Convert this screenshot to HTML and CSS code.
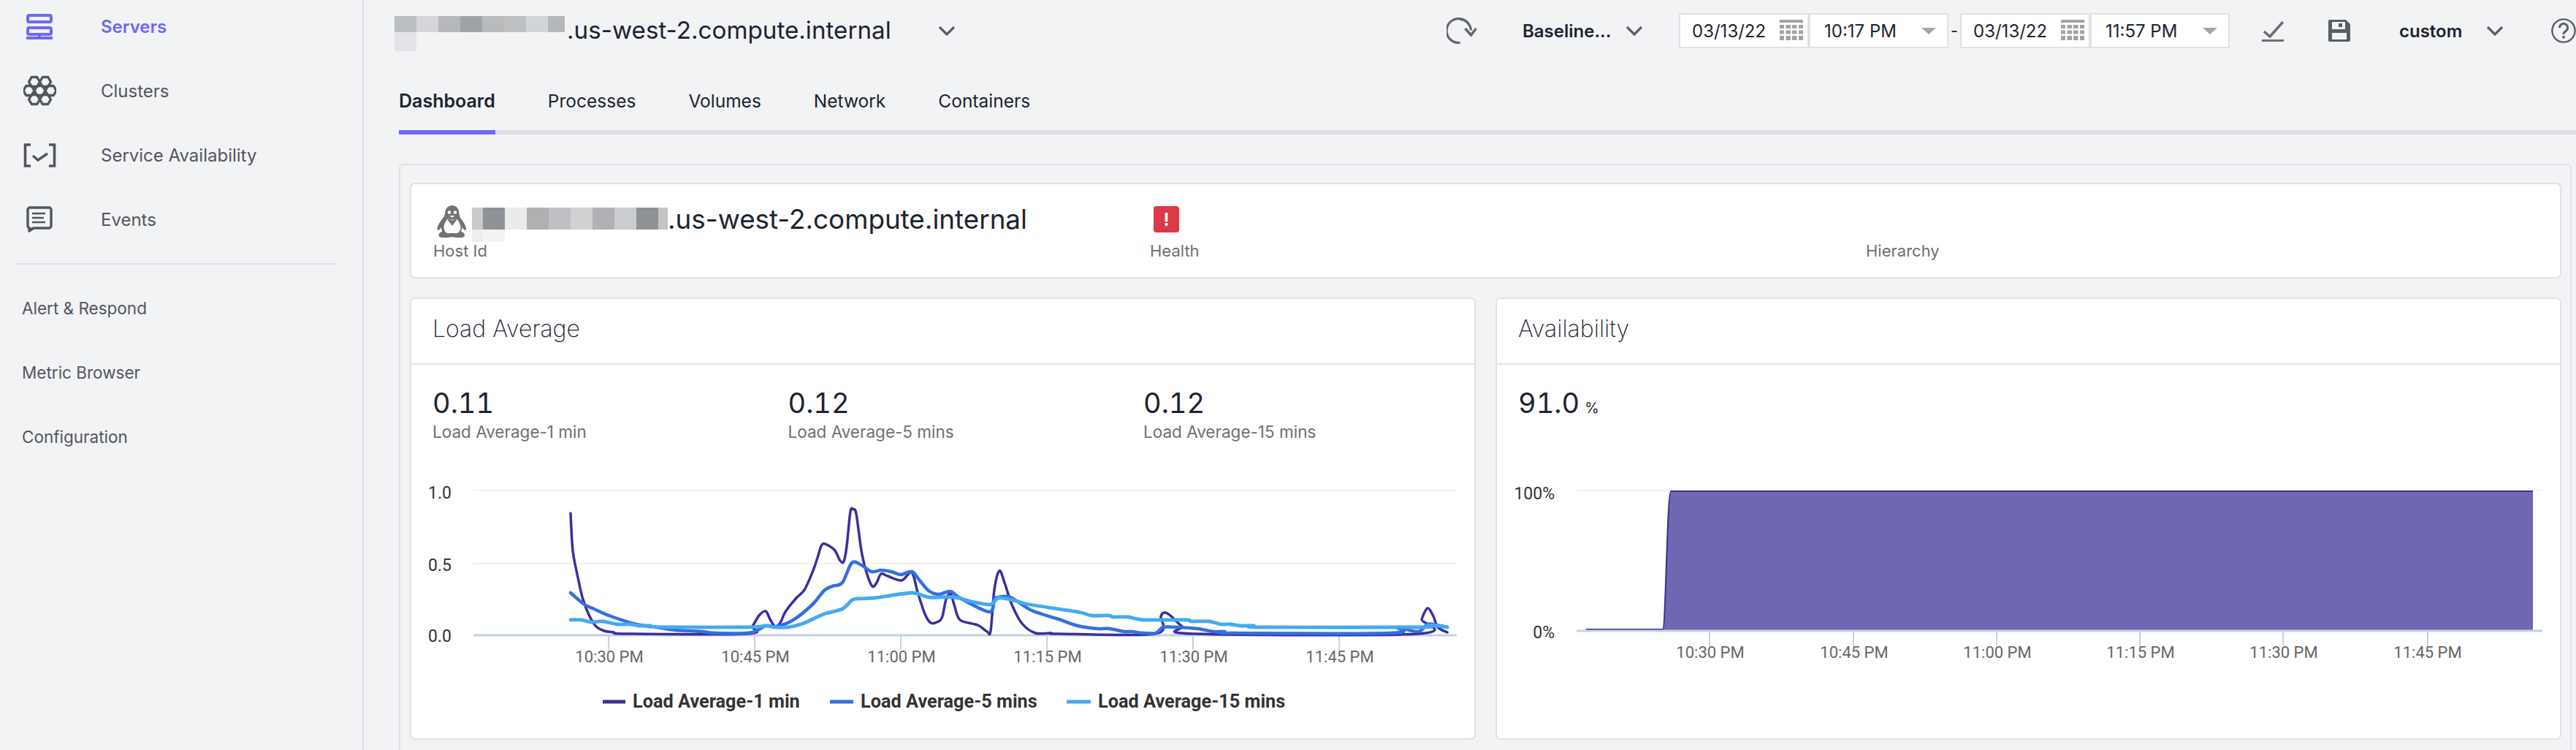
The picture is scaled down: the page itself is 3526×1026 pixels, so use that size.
FILE: index.html
```html
<!DOCTYPE html>
<html lang="en">
<head>
<meta charset="utf-8">
<title>Servers</title>
<link rel="stylesheet" href="styles.css">
</head>
<body>
<svg class="defs" width="0" height="0" aria-hidden="true">
  <defs>
    <symbol id="chev" viewBox="0 0 24 14"><path d="M2 2l10 10L22 2" fill="none" stroke="currentColor" stroke-width="3.2"/></symbol>
    <symbol id="cal" viewBox="0 0 32 30">
      <path fill="#a3a3a3" d="M0 0h32v4H0zM0 7h6v5H0zM8.500 7h6.500v5H8.500zM17 7h6.500v5H17zM26 7h6v5h-6zM0 14.500h6v5H0zM8.500 14.500h6.500v5H8.500zM17 14.500h6.500v5H17zM26 14.500h6v5h-6zM0 22h6v6H0zM8.500 22h6.500v6H8.500zM17 22h6.500v6H17zM26 22h6v6h-6z"/>
    </symbol>
    <symbol id="tri" viewBox="0 0 20 9"><path fill="#a6a6a6" d="M0 0h20L10 9z"/></symbol>
    <polygon id="hex" points="7.500,0 3.750,6.500 -3.750,6.500 -7.500,0 -3.750,-6.500 3.750,-6.500" fill="none" stroke="currentColor" stroke-width="3.400" stroke-linejoin="round"/>
  </defs>
</svg>

<aside class="sidebar">
  <nav class="nav-main">
    <a class="nav-item is-active">
      <span class="nav-icon">
        <svg width="36" height="35" viewBox="0 0 36 35" fill="none" stroke="currentColor" stroke-width="4"><rect x="2" y="2" width="32" height="9" rx="2"/><rect x="2" y="19" width="32" height="9" rx="2"/><path d="M18 28v5M0 33h36"/></svg>
      </span>
      <span>Servers</span>
    </a>
    <a class="nav-item">
      <span class="nav-icon">
        <svg width="45" height="42" viewBox="0 0 45 42"><use href="#hex" x="15" y="9"/><use href="#hex" x="30" y="9"/><use href="#hex" x="7.500" y="21"/><use href="#hex" x="22.500" y="21"/><use href="#hex" x="37.500" y="21"/><use href="#hex" x="15" y="33"/><use href="#hex" x="30" y="33"/></svg>
      </span>
      <span>Clusters</span>
    </a>
    <a class="nav-item">
      <span class="nav-icon">
        <svg width="45" height="33" viewBox="0 0 45 33" fill="none" stroke="currentColor" stroke-width="3.600"><path d="M10 2H2.500v29H10M35 2h7.500v29H35"/><path d="M13 17l7 6 13-9" stroke-width="3.400"/></svg>
      </span>
      <span>Service Availability</span>
    </a>
    <a class="nav-item">
      <span class="nav-icon">
        <svg width="36" height="36" viewBox="0 0 36 36" fill="none" stroke="currentColor" stroke-width="3.400"><path d="M5 2h26a3 3 0 0 1 3 3v22a3 3 0 0 1-3 3H10l-6 4V30H5a3 3 0 0 1-3-3V5a3 3 0 0 1 3-3z" stroke-linejoin="round"/><path d="M8 10h18M8 16h16M8 22h18" stroke-width="2.600"/></svg>
      </span>
      <span>Events</span>
    </a>
  </nav>
  <div class="nav-divider"></div>
  <nav class="nav-sub">
    <a class="nav-sub-item">Alert &amp; Respond</a>
    <a class="nav-sub-item">Metric Browser</a>
    <a class="nav-sub-item">Configuration</a>
  </nav>
</aside>

<main class="main">
  <header class="topbar">
    <div class="redact redact-title" aria-hidden="true"><i></i><i></i></div>
    <h1 class="page-title">.us-west-2.compute.internal</h1>
    <svg class="chev chev-title"><use href="#chev"/></svg>

    <svg class="tool tool-refresh" width="42" height="36" viewBox="0 0 42 36" fill="none" stroke="#63666b" stroke-width="3.200"><path d="M30 8.500A16.500 16.500 0 1 0 18.500 34.400"/><path d="M18 2.500a16 16 0 0 1 15.500 15"/><path d="M25.500 15l8 9 7-9" stroke-width="3.400"/></svg>
    <span class="pick pick-baseline">Baseline...</span>
    <svg class="chev chev-baseline"><use href="#chev"/></svg>

    <div class="range range-first">
      <span class="range-date">03/13/22<svg class="cal"><use href="#cal"/></svg></span>
      <span class="range-time">10:17 PM<svg class="tri"><use href="#tri"/></svg></span>
    </div>
    <span class="range-dash">-</span>
    <div class="range">
      <span class="range-date">03/13/22<svg class="cal"><use href="#cal"/></svg></span>
      <span class="range-time">11:57 PM<svg class="tri"><use href="#tri"/></svg></span>
    </div>

    <svg class="tool tool-check" width="30" height="30" viewBox="0 0 30 30" fill="none" stroke="#6b6d70"><path d="M3 16l8 7L29 3" stroke-width="3.600"/><path d="M0 28.500h30" stroke-width="3"/></svg>
    <svg class="tool tool-save" width="30" height="30" viewBox="0 0 30 30"><path fill="#5b5e63" fill-rule="evenodd" d="M2 0h22l6 6v22a2 2 0 0 1-2 2H2a2 2 0 0 1-2-2V2a2 2 0 0 1 2-2zM5 3v10h18V3zM5 18v9h20v-9zM14 5h5v5h-5z"/></svg>
    <span class="pick pick-custom">custom</span>
    <svg class="chev chev-custom"><use href="#chev"/></svg>
    <svg class="tool tool-help" width="34" height="34" viewBox="0 0 34 34" fill="none" stroke="#5b5e63" stroke-width="2.400"><circle cx="17" cy="17" r="15.600"/><path d="M11.500 13a5.500 5.500 0 1 1 8.500 4.500c-2 1.300-3 2.300-3 4.500" stroke-width="3"/><path d="M17 24v3.500" stroke-width="3.400"/></svg>
  </header>

  <nav class="tabs">
    <a class="tab is-active">Dashboard</a>
    <a class="tab">Processes</a>
    <a class="tab">Volumes</a>
    <a class="tab">Network</a>
    <a class="tab">Containers</a>
  </nav>

  <section class="panel">
    <div class="card host-card">
      <div class="host-col">
        <div class="host-value">
          <svg class="penguin" width="46" height="44" viewBox="0 0 46 44">
            <path fill="#727272" d="M23 0c6 0 9.500 5 9.500 11 0 3 1 5 3 8 3 4 6.500 9 6.500 13.500 0 1.500-1.500 2-3 .5l-2.500-3c0 2-.5 4-1.500 5.500 3 1 5 3 5 5.500 0 2-2 3-5 3H28c-2 0-3-1-5-1s-3 1-5 1H9.500c-3 0-5-1-5-3 0-2.500 2-4.500 5-5.500-1-1.500-1.500-3.500-1.500-5.500l-2.500 3c-1.500 1.500-3 1-3-.5C2.500 28 6 23 9 19c2-3 4-5 4-8C13 5 17 0 23 0z"/>
            <path fill="#fff" d="M17 17.500c3 2.500 9 2.500 12 0 2.500 4 5.500 8 5.500 12.500 0 4.500-2.500 7.500-5.500 8H17c-3-.5-5.500-3.500-5.500-8 0-4.500 3-8.500 5.500-12.500z"/>
            <path fill="#727272" d="M15 17l8 3.500 8-3.500-8 11z"/>
            <circle cx="19" cy="9.500" r="2.200" fill="#fff"/><circle cx="27" cy="9.500" r="2.200" fill="#fff"/>
            <path fill="#fff" d="M19.500 14h7l-3.500 3z"/>
          </svg>
          <div class="redact redact-host" aria-hidden="true"><i></i><i></i></div>
          <span class="host-name">.us-west-2.compute.internal</span>
        </div>
        <div class="host-label">Host Id</div>
      </div>
      <div class="host-col host-col-health">
        <div class="host-value">
          <span class="alert-badge">!</span>
        </div>
        <div class="host-label">Health</div>
      </div>
      <div class="host-col">
        <div class="host-value"></div>
        <div class="host-label">Hierarchy</div>
      </div>
    </div>

    <div class="chart-grid">
      <article class="card chart-card">
        <h2 class="chart-title">Load Average</h2>
        <div class="stats">
          <div class="stat">
            <div class="stat-value">0.11</div>
            <div class="stat-label">Load Average-1 min</div>
          </div>
          <div class="stat">
            <div class="stat-value">0.12</div>
            <div class="stat-label">Load Average-5 mins</div>
          </div>
          <div class="stat">
            <div class="stat-value">0.12</div>
            <div class="stat-label">Load Average-15 mins</div>
          </div>
        </div>
        <svg class="chart" viewBox="563 641 1455 369">
          <g class="grid">
            <path d="M648 671H1994M648 771H1994"/>
          </g>
          <path class="axis" d="M648 869H1994"/>
          <path class="tick" d="M833 869v20M1033 869v20M1233 869v20M1433 869v20M1633 869v20M1833 869v20"/>
          <g class="y-labels">
            <text x="618" y="682">1.0</text>
            <text x="618" y="781">0.5</text>
            <text x="618" y="878">0.0</text>
          </g>
          <g class="x-labels">
            <text x="834" y="906">10:30 PM</text>
            <text x="1034" y="906">10:45 PM</text>
            <text x="1234" y="906">11:00 PM</text>
            <text x="1434" y="906">11:15 PM</text>
            <text x="1634" y="906">11:30 PM</text>
            <text x="1834" y="906">11:45 PM</text>
          </g>
          <path class="line line-1" data-points="781,702 784,753 791,790 798,820 807,843 816,857 827,863 840,865 858,867 1023,867 1030,857 1039,842 1048,836 1054,847 1061,857 1068,852 1075,837 1090,818 1101,807 1112,783 1119,763 1124,747 1129,744 1142,752 1150,767 1155,768 1159,747 1164,700 1168,697 1172,703 1179,753 1186,783 1194,802 1200,797 1206,785 1215,788 1234,794 1248,783 1256,810 1266,840 1274,852 1285,850 1290,843 1295,820 1301,812 1306,827 1314,848 1338,855 1351,864 1356,863 1361,807 1368,781 1375,797 1385,827 1399,853 1417,866 1438,866 1449,867 1581,867 1589,843 1594,838 1602,842 1618,857 1634,867 1941,867 1946,847 1954,832 1962,843 1968,858 1981,865"></path>
          <path class="line line-2" data-points="781,811 800,827 813,833 836,843 871,854 898,858 925,862 961,864 979,866 1023,866 1037,862 1048,856 1063,857 1086,848 1112,827 1128,808 1139,802 1153,797 1166,770 1179,773 1193,782 1206,780 1220,782 1233,786 1248,782 1258,793 1271,808 1285,813 1301,809 1314,818 1354,837 1361,820 1367,817 1383,817 1412,835 1449,847 1475,856 1502,860 1518,860 1539,864 1549,864 1565,866 1582,866 1592,858 1610,858 1639,860 1661,864 1676,864 1687,866 1904,866 1914,859 1941,864 1954,854 1965,855 1981,858"></path>
          <path class="line line-3" data-points="781,848 796,848 809,851 825,850 845,854 862,854 876,856 889,856 907,858 1023,858 1048,856 1061,858 1079,858 1099,853 1128,840 1153,833 1166,821 1175,819 1197,818 1248,811 1271,817 1306,817 1330,823 1356,827 1367,818 1391,822 1409,827 1475,837 1494,842 1518,842 1523,844 1544,844 1565,848 1623,848 1631,850 1655,850 1671,854 1684,854 1698,856 1716,856 1727,858 1941,858 1954,856 1968,856 1981,858"></path>
          <g class="legend">
            <path class="line line-1" d="M825 960H856"/>
            <text x="866" y="968">Load Average-1 min</text>
            <path class="line line-2" d="M1136 960H1168"/>
            <text x="1178" y="968">Load Average-5 mins</text>
            <path class="line line-3" d="M1460 960H1493"/>
            <text x="1503" y="968">Load Average-15 mins</text>
          </g>
        </svg>
      </article>

      <article class="card chart-card">
        <h2 class="chart-title">Availability</h2>
        <div class="stats">
          <div class="stat">
            <div class="stat-value">91.0<small class="stat-unit">%</small></div>
          </div>
        </div>
        <svg class="chart" viewBox="2049 641 1455 369">
          <g class="grid"><path d="M2158 671H3480"/></g>
          <path class="area" d="M2171 861H2276C2280 861 2282 672 2287 672H3467V862H2171Z"/>
          <path class="area-line" d="M2171 861H2276C2280 861 2282 672 2287 672H3467"/>
          <path class="axis" d="M2158 863H3480"/>
          <path class="tick" d="M2340 863v20M2537 863v20M2733 863v20M2929 863v20M3125 863v20M3323 863v20"/>
          <g class="y-labels">
            <text x="2128" y="683">100%</text>
            <text x="2128" y="873">0%</text>
          </g>
          <g class="x-labels">
            <text x="2341" y="900">10:30 PM</text>
            <text x="2538" y="900">10:45 PM</text>
            <text x="2734" y="900">11:00 PM</text>
            <text x="2930" y="900">11:15 PM</text>
            <text x="3126" y="900">11:30 PM</text>
            <text x="3323" y="900">11:45 PM</text>
          </g>
        </svg>
      </article>
    </div>
  </section>
</main>
<script src="chart.js"></script>
</body>
</html>
```

FILE: styles.css
```css
* { box-sizing: border-box; }

html, body { height: 100%; }

body {
  margin: 0;
  height: 1026px;
  overflow: hidden;
  display: flex;
  background: #f2f3f5;
  color: #1c2430;
  font-family: Inter, "Liberation Sans", sans-serif;
}

.defs { position: absolute; }

/* sidebar */
.sidebar {
  flex: 0 0 498px;
  border-right: 2px solid #dcdee1;
  color: #52565c;
}

.nav-main { margin-top: -8px; }

.nav-item {
  display: flex;
  align-items: center;
  height: 88px;
  padding-left: 22px;
  font-size: 24px;
}

.nav-item.is-active { color: #6f69f5; font-weight: 600; }

.nav-icon {
  flex: 0 0 116px;
  width: 116px;
  padding-left: 10px;
  display: flex;
  align-items: center;
}

.nav-item.is-active .nav-icon,
.nav-item:last-child .nav-icon { padding-left: 14px; }

.nav-divider {
  height: 2px;
  margin: 16px 36px 15px 22px;
  background: #dfe1e4;
}

.nav-sub-item {
  display: flex;
  align-items: center;
  height: 88px;
  padding-left: 30px;
  font-size: 22.500px;
}

/* main */
.main {
  flex: 1;
  min-width: 0;
  padding-left: 48px;
}

.topbar {
  display: flex;
  align-items: center;
  height: 84px;
  margin-left: -6px;
}

.redact { flex: none; }
.redact i { display: block; }

.redact-title { width: 233px; align-self: flex-start; margin-top: 22px; }
.redact-title i:first-child {
  height: 22px;
  background: linear-gradient(90deg,
    #bcbfc2 0 30px, #d5d6d9 30px 60px, #b6b8bb 60px 90px, #a0a3a6 90px 120px,
    #b8babc 120px 150px, #bec0c2 150px 180px, #d2d5d8 180px 210px, #b5b8ba 210px);
}
.redact-title i:last-child { width: 30px; height: 26px; background: #e3e4e7; }

.page-title {
  margin: 0 0 2px 3px;
  width: 443px;
  flex: none;
  font-size: 33.200px;
  font-weight: 400;
  white-space: nowrap;
}

.chev { flex: none; width: 24px; height: 14px; color: #5b5e63; }
.chev-title { margin-left: 65px; }
.chev-baseline { margin-left: 23px; }
.chev-custom { margin-left: 33px; }

.tool { flex: none; }
.tool-refresh { margin-left: auto; }
.tool-check { margin-left: 44px; }
.tool-save { margin-left: 61px; }
.tool-help { margin-left: 65px; }

.pick { flex: none; font-size: 24px; font-weight: 600; white-space: nowrap; }
.pick-baseline { width: 118px; margin-left: 62px; }
.pick-custom { width: 86px; margin-left: 67px; }

.range {
  flex: none;
  display: flex;
  width: 369px;
  height: 48px;
  border: 2px solid #dfe1e4;
  background: #fff;
  font-size: 24px;
}
.range-first { margin-left: 49px; }

.range-date, .range-time {
  display: flex;
  align-items: center;
  white-space: nowrap;
}
.range-date {
  flex: 0 0 178px;
  padding-left: 16px;
  border-right: 4px solid #dfe1e4;
}
.range-time { flex: 1; padding-left: 19px; }

.cal { flex: none; width: 32px; height: 30px; margin-left: auto; margin-right: 6px; }
.tri { flex: none; width: 20px; height: 9px; margin-left: auto; margin-right: 15px; }

.range-dash { flex: 0 0 16px; text-align: center; font-size: 22px; }

/* tabs */
.tabs {
  display: flex;
  gap: 72px;
  height: 100px;
  border-bottom: 6px solid #dddfe2;
}

.tab {
  height: 100px;
  padding-top: 38px;
  font-size: 24.500px;
  line-height: 32px;
  white-space: nowrap;
}

.tab.is-active {
  font-size: 25px;
  font-weight: 600;
  border-bottom: 6px solid #6f69f5;
}

/* dashboard panel */
.panel {
  margin: 40px 6px 0 0;
  padding: 24px 12px 40px 13px;
  border: 2px solid #dfe1e4;
  border-radius: 6px;
}

.card {
  background: #fff;
  border: 2px solid #dfe1e4;
  border-radius: 7px;
}

.host-card {
  display: grid;
  grid-template-columns: 981px 980px 1fr;
  height: 131px;
  padding: 29px 0 0 30px;
}

.host-value {
  display: flex;
  align-items: flex-start;
  height: 47px;
}

.penguin { flex: none; margin: 0 4px 0 3px; }

.redact-host { width: 268px; margin-top: 3px; }
.redact-host i:first-child {
  height: 30px;
  background: linear-gradient(90deg,
    #c9cacc 0 15px, #8f9296 15px 45px, #eaeaea 45px 75px, #aeb0b2 75px 105px,
    #bfc0c3 105px 135px, #d0d1d2 135px 165px, #b0b1b4 165px 195px, #cbcccd 195px 225px,
    #8e9195 225px 255px, #c3c4c5 255px);
}
.redact-host i:last-child {
  width: 45px;
  height: 17px;
  background: linear-gradient(90deg, #eeeeee 0 15px, #f3f3f3 15px);
}

.host-name {
  margin-top: -3px;
  font-size: 36.800px;
  line-height: 44px;
  white-space: nowrap;
}

.alert-badge {
  display: flex;
  align-items: center;
  justify-content: center;
  width: 35px;
  height: 36px;
  margin: 1px 0 0 5px;
  border-radius: 4px;
  background: #dc3a47;
  color: #fff;
  font-size: 24px;
  font-weight: 700;
}

.host-label {
  height: 30px;
  font-size: 22px;
  line-height: 30px;
  color: #6f6f6f;
}

.chart-grid {
  display: grid;
  grid-template-columns: 1459px 1459px;
  gap: 27px;
  margin-top: 26px;
}

.chart-card {
  height: 605px;
  display: flex;
  flex-direction: column;
}

.chart-title {
  flex: none;
  height: 90px;
  margin: 0;
  padding-left: 29px;
  border-bottom: 2px solid #dfe1e4;
  font-size: 32px;
  font-weight: 200;
  line-height: 82px;
  white-space: nowrap;
}

.stats {
  flex: none;
  display: flex;
  height: 142px;
  padding: 30px 0 0 29px;
}

.stat { flex: 0 0 486.500px; }

.stat-value {
  font-size: 38px;
  font-variant-numeric: tabular-nums;
  line-height: 44px;
}

.stat-unit {
  margin-left: 7px;
  font-size: 20px;
}

.stat-label {
  margin-top: 3px;
  font-size: 22.500px;
  line-height: 30px;
  color: #707070;
}

.chart {
  display: block;
  width: 1455px;
  height: 369px;
  flex: none;
  font-family: Roboto, Inter, sans-serif;
}

.grid path { stroke: #f0f0f0; stroke-width: 2; fill: none; }
.axis { stroke: #c4d2e2; stroke-width: 3; fill: none; }
.tick { stroke: #c4d2e2; stroke-width: 2; fill: none; }

.y-labels text { text-anchor: end; font-size: 23px; fill: #333; }
.x-labels text { text-anchor: middle; font-size: 22px; fill: #666; }
.legend text { font-size: 25.300px; font-weight: 700; fill: #333; }

.line { fill: none; stroke-linejoin: round; stroke-linecap: round; }
.line-1 { stroke: #3b2f9b; stroke-width: 3.500; }
.line-2 { stroke: #3370e0; stroke-width: 4.500; }
.line-3 { stroke: #45a9f0; stroke-width: 4.800; }
.legend .line { stroke-linecap: butt; stroke-width: 5; }

.area { fill: #6f67b1; }
.area-line { fill: none; stroke: #3b2f9b; stroke-width: 2; }
```

FILE: chart.js
```js
// Turns the sampled points of each series into a smooth Catmull-Rom path.
document.querySelectorAll('path[data-points]').forEach(function (path) {
  var pts = path.dataset.points.trim().split(/\s+/).map(function (p) {
    return p.split(',').map(Number);
  });
  var d = 'M' + pts[0].join(' ');
  for (var i = 0; i < pts.length - 1; i++) {
    var p0 = pts[Math.max(i - 1, 0)];
    var p1 = pts[i];
    var p2 = pts[i + 1];
    var p3 = pts[Math.min(i + 2, pts.length - 1)];
    var t = 0.16;
    d += 'C' + (p1[0] + (p2[0] - p0[0]) * t).toFixed(1) + ' ' + (p1[1] + (p2[1] - p0[1]) * t).toFixed(1) +
      ' ' + (p2[0] - (p3[0] - p1[0]) * t).toFixed(1) + ' ' + (p2[1] - (p3[1] - p1[1]) * t).toFixed(1) +
      ' ' + p2[0] + ' ' + p2[1];
  }
  path.setAttribute('d', d);
});
```
